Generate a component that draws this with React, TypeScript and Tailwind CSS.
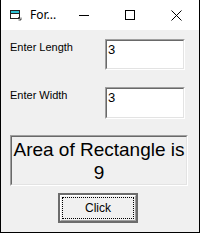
const sans = { fontFamily: '"Liberation Sans", Arial, sans-serif' };

function Sunken({ className, children }: { className: string; children?: React.ReactNode }) {
  return (
    <div className={"border border-t-[#a0a0a0] border-l-[#a0a0a0] border-b-white border-r-white " + className}>
      <div className="h-full border border-t-[#696969] border-l-[#696969] border-b-[#e3e3e3] border-r-[#e3e3e3]">
        {children}
      </div>
    </div>
  );
}

function FormIcon() {
  return (
    <svg width="14" height="14" viewBox="0 0 14 14" className="shrink-0">
      <rect x="1.5" y="2.5" width="9" height="8" fill="#fff" stroke="#222" />
      <rect x="2" y="3" width="8" height="2" fill="#2ec4d6" />
      <path d="M1.5 5.5h9" stroke="#222" />
      <path d="M9 9l3 3M12 9.5v2.5h-2.5" stroke="#555" fill="none" />
    </svg>
  );
}

export default function App() {
  return (
    <div className="w-[200px] h-[233px] bg-[#f0f0f0] border-x border-b border-black flex flex-col" style={sans}>
      {/* title bar */}
      <div className="h-[30px] bg-white flex items-center shrink-0">
        <div className="pl-[8px] flex items-center gap-[7px] w-[60px]">
          <FormIcon />
          <span className="text-[12px] text-black" style={{ fontFamily: '"Noto Sans", sans-serif' }}>
            For...
          </span>
        </div>
        <div className="w-[46px] h-full flex items-center justify-center">
          <div className="w-[10px] h-px bg-black" />
        </div>
        <div className="w-[46px] h-full flex items-center justify-center">
          <div className="w-[10px] h-[10px] border border-black" />
        </div>
        <div className="w-[46px] h-full flex items-center justify-center">
          <svg width="11" height="11" viewBox="0 0 11 11">
            <path d="M0.5 0.5l10 10M10.5 0.5l-10 10" stroke="#000" strokeWidth="1" />
          </svg>
        </div>
      </div>

      {/* body */}
      <div className="flex flex-col pt-[9px] pl-[8px] text-black">
        <div className="flex">
          <div className="w-[96px] pl-[1px] text-[11px] leading-[16px]">Enter Length</div>
          <Sunken className="w-[80px] h-[31px] bg-white">
            <div className="pl-[1px] pt-[1px] text-[13px] leading-[16px]">3</div>
          </Sunken>
        </div>
        <div className="flex mt-[17px]">
          <div className="w-[96px] pl-[1px] text-[11px] leading-[16px]">Enter Width</div>
          <Sunken className="w-[80px] h-[32px] bg-white">
            <div className="pl-[1px] pt-[1px] text-[13px] leading-[16px]">3</div>
          </Sunken>
        </div>
        <Sunken className="mt-[16px] ml-[1px] w-[178px] h-[51px]">
          <div className="text-center text-[19px] leading-[23px] pt-[1px]">
            Area of Rectangle is
            <br />9
          </div>
        </Sunken>
        <div className="mt-[7px] ml-[49px] w-[80px] h-[30px] border-2 border-[#6c6c6c]">
          <div className="h-full border border-t-white border-l-white border-b-[#a0a0a0] border-r-[#a0a0a0] p-px">
            <div className="h-full border border-dotted border-black flex items-center justify-center text-[12px]">
              Click
            </div>
          </div>
        </div>
      </div>
    </div>
  );
}
